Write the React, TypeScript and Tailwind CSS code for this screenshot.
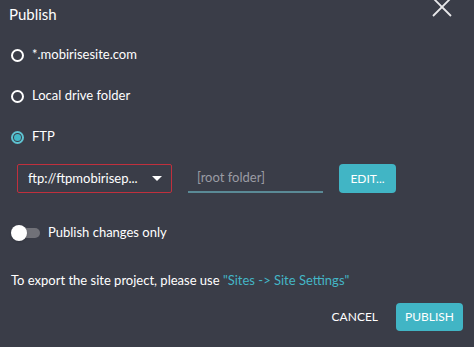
import React from "react";

function Radio({ checked, label }: { checked?: boolean; label: string }) {
  return (
    <div className="flex items-center h-[20px]">
      {checked ? (
        <span className="w-[13px] h-[13px] rounded-full border-[2px] border-[#5fc3d1] bg-[#3a3d48] flex items-center justify-center ml-[11px]">
          <span className="w-[7px] h-[7px] rounded-full bg-[#42b7c6]" />
        </span>
      ) : (
        <span className="w-[13px] h-[13px] rounded-full border-[2px] border-white ml-[11px]" />
      )}
      <span className="ml-[8px] text-[13px] text-white">{label}</span>
    </div>
  );
}

export default function App() {
  return (
    <div
      className="w-[474px] h-[347px] bg-[#3a3d48] relative overflow-hidden text-white"
      style={{ fontFamily: "Lato, 'Noto Sans', sans-serif" }}
    >
      <svg className="absolute left-[431px] top-[-4px]" width="22" height="22" viewBox="0 0 22 22">
        <path d="M2 2 L20 20 M20 2 L2 20" stroke="#e8e8ea" strokeWidth="1.8" fill="none" />
      </svg>
      <div className="pt-[4px] pl-[9px] text-[15px] leading-[20px]">Publish</div>
      <div className="flex flex-col gap-[21px] mt-[21px]">
        <Radio label="*.mobirisesite.com" />
        <Radio label="Local drive folder" />
        <Radio checked label="FTP" />
      </div>
      <div className="flex items-center mt-[17px] ml-[17px]">
        <div className="w-[155px] h-[29px] border border-[#c0303d] rounded-[2px] flex items-center pl-[10px] pr-[9px] justify-between">
          <span className="text-[13px] text-white">ftp://ftpmobirisep...</span>
          <svg width="10" height="6" viewBox="0 0 10 6">
            <path d="M0 0 L10 0 L5 5 Z" fill="#ffffff" />
          </svg>
        </div>
        <div className="ml-[16px] w-[135px] h-[29px] border-b-2 border-[#5a8a96] flex items-center pl-[9px]">
          <span className="text-[13px] text-[#9a9ca4]">[root folder]</span>
        </div>
        <button className="ml-[16px] w-[57px] h-[29px] rounded-[4px] bg-[#41b5c5] text-[12px] text-white">
          EDIT...
        </button>
      </div>
      <div className="flex items-center mt-[30px] ml-[11px]">
        <div className="relative w-[29px] h-[16px]">
          <div className="absolute left-[5px] top-[3px] w-[24px] h-[10px] rounded-full bg-[#707178]" />
          <div className="absolute left-0 top-0 w-[16px] h-[16px] rounded-full bg-white shadow" />
        </div>
        <span className="ml-[8px] text-[13px] text-white">Publish changes only</span>
      </div>
      <div className="mt-[28px] ml-[11px] text-[13px] text-white">
        To export the site project, please use{" "}
        <span className="text-[#44b6c6]">"Sites -&gt; Site Settings"</span>
      </div>
      <div className="flex justify-end items-center mt-[13px] pr-[11px]">
        <span className="text-[12px] text-white mr-[18px]">CANCEL</span>
        <button className="w-[67px] h-[28px] rounded-[4px] bg-[#41b5c5] text-[12px] text-white">
          PUBLISH
        </button>
      </div>
    </div>
  );
}
